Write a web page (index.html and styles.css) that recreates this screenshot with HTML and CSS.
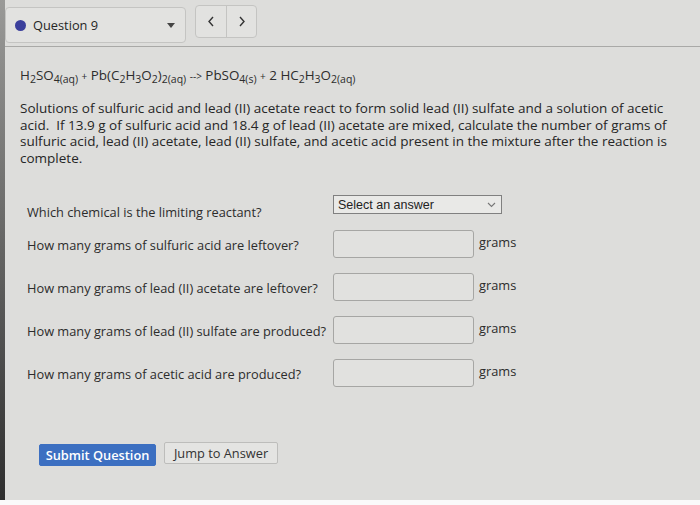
FILE: index.html
```html
<!DOCTYPE html>
<html>
<head>
<meta charset="utf-8">
<link rel="stylesheet" href="styles.css">
</head>
<body>
<div class="page">
  <header class="topbar">
    <div class="qselect">
      <span class="dot"></span>
      <span class="qtitle">Question 9</span>
      <span class="caret"></span>
    </div>
    <div class="nav">
      <button class="navbtn"><svg width="8" height="11" viewBox="0 0 8 11"><path d="M6 1 L2 5.5 L6 10" fill="none" stroke="#333" stroke-width="1.4"/></svg></button>
      <button class="navbtn"><svg width="8" height="11" viewBox="0 0 8 11"><path d="M2 1 L6 5.5 L2 10" fill="none" stroke="#333" stroke-width="1.4"/></svg></button>
    </div>
  </header>
  <main class="content">
    <p class="equation">H<sub>2</sub>SO<sub>4(aq)</sub> <span class="op">+</span> Pb(C<sub>2</sub>H<sub>3</sub>O<sub>2</sub>)<sub>2(aq)</sub> <span class="op">--&gt;</span> PbSO<sub>4(s)</sub> <span class="op">+</span> 2 HC<sub>2</sub>H<sub>3</sub>O<sub>2(aq)</sub></p>
    <p class="problem">Solutions of sulfuric acid and lead (II) acetate react to form solid lead (II) sulfate and a solution of acetic acid.&nbsp; If 13.9 g of sulfuric acid and 18.4 g of lead (II) acetate are mixed, calculate the number of grams of sulfuric acid, lead (II) acetate, lead (II) sulfate, and acetic acid present in the mixture after the reaction is complete.</p>
    <div class="qa">
      <div class="label first">Which chemical is the limiting reactant?</div>
      <div class="answer first-ans">
        <div class="select"><span>Select an answer</span><svg class="chev" width="9" height="6" viewBox="0 0 9 6"><path d="M1 1 L4.5 4.5 L8 1" fill="none" stroke="#777" stroke-width="1.1"/></svg></div>
      </div>
      <div class="label">How many grams of sulfuric acid are leftover?</div>
      <div class="answer"><div class="input"></div><span class="unit">grams</span></div>
      <div class="label">How many grams of lead (II) acetate are leftover?</div>
      <div class="answer"><div class="input"></div><span class="unit">grams</span></div>
      <div class="label">How many grams of lead (II) sulfate are produced?</div>
      <div class="answer"><div class="input"></div><span class="unit">grams</span></div>
      <div class="label">How many grams of acetic acid are produced?</div>
      <div class="answer"><div class="input"></div><span class="unit">grams</span></div>
    </div>
    <div class="buttons">
      <button class="btn primary">Submit Question</button>
      <button class="btn secondary">Jump to Answer</button>
    </div>
  </main>
</div>
</body>
</html>
```
FILE: styles.css
```css
html, body {
  margin: 0;
  padding: 0;
  background: #fafafa;
}
body {
  width: 700px;
  height: 505px;
  overflow: hidden;
  font-family: "Open Sans", "Noto Sans", sans-serif;
  color: #2c2c2c;
}
.page {
  height: 500px;
  background: #dddddb;
  border-left: 5px solid #4a4a4a;
  border-image: linear-gradient(#9a9a98, #2e2e2e) 1;
  box-sizing: border-box;
}
.topbar {
  display: flex;
  align-items: flex-start;
  gap: 9px;
  padding: 5px 0 0 0;
  height: 41px;
  border-bottom: 1px solid #a9a9a7;
}
.qselect {
  width: 181px;
  height: 36px;
  box-sizing: border-box;
  border: 1px solid #c4c4c2;
  border-radius: 4px;
  background: #e2e2e0;
  display: flex;
  align-items: center;
  padding: 0 10px 0 9px;
  margin-top: 2px;
}
.dot {
  width: 11px;
  height: 11px;
  border-radius: 50%;
  background: #3b3f9c;
  margin-right: 7px;
}
.qtitle {
  font-size: 12.8px;
  color: #262626;
  flex: 1;
}
.caret {
  width: 0;
  height: 0;
  border-left: 4px solid transparent;
  border-right: 4px solid transparent;
  border-top: 5px solid #444;
}
.nav {
  display: flex;
  border: 1px solid #c4c4c2;
  border-radius: 4px;
  background: #e2e2e0;
  height: 33px;
  box-sizing: border-box;
}
.navbtn {
  width: 30px;
  border: none;
  background: transparent;
  padding: 0;
  display: flex;
  align-items: center;
  justify-content: center;
}
.navbtn + .navbtn {
  border-left: 1px solid #c4c4c2;
}
.content {
  padding: 0 0 0 15px;
}
.equation {
  margin: 19px 0 0 0;
  font-size: 13.4px;
  line-height: 18px;
}
.equation sub {
  font-size: 10.5px;
  vertical-align: -3px;
  line-height: 0;
}
.equation .op {
  font-size: 10px;
}
.problem {
  margin: 15px 0 0 0;
  font-size: 13.5px;
  line-height: 16.5px;
  width: 660px;
  color: #262626;
}
.qa {
  display: grid;
  grid-template-columns: 306px auto;
  row-gap: 15px;
  align-items: center;
  margin-top: 34px;
  padding-left: 7px;
}
.label {
  font-size: 12.8px;
  height: 28px;
  line-height: 30px;
}
.label.first {
  height: 20px;
  line-height: 24px;
  margin-bottom: -5px;
}
.first-ans {
  margin-top: -6px;
}
.answer {
  display: flex;
  align-items: center;
  gap: 5px;
}
.select {
  width: 169px;
  height: 19px;
  box-sizing: border-box;
  border: 1px solid #808080;
  background: #e9e9e7;
  display: flex;
  align-items: center;
  justify-content: space-between;
  padding: 0 5px 0 4px;
  font-family: "Liberation Sans", Arial, sans-serif;
  font-size: 12.5px;
  color: #222;
}
.input {
  width: 141px;
  height: 28px;
  box-sizing: border-box;
  border: 1px solid #a6a6a4;
  border-radius: 3px;
  background: #e1e1df;
}
.unit {
  font-size: 12.8px;
  margin-top: -4px;
}
.buttons {
  display: flex;
  gap: 8px;
  margin-top: 57px;
  padding-left: 19px;
}
.btn {
  height: 22px;
  font-family: "Open Sans", "Noto Sans", sans-serif;
  font-size: 12.8px;
  padding: 0;
  border-radius: 2px;
  white-space: nowrap;
}
.primary {
  background: #3c6fc1;
  color: #fff;
  border: 1px solid #3c6fc1;
  font-weight: 600;
  width: 117px;
}
.secondary {
  background: #e4e4e2;
  color: #333;
  border: 1px solid #bdbdbb;
  width: 114px;
  margin-top: -2px;
}
```
